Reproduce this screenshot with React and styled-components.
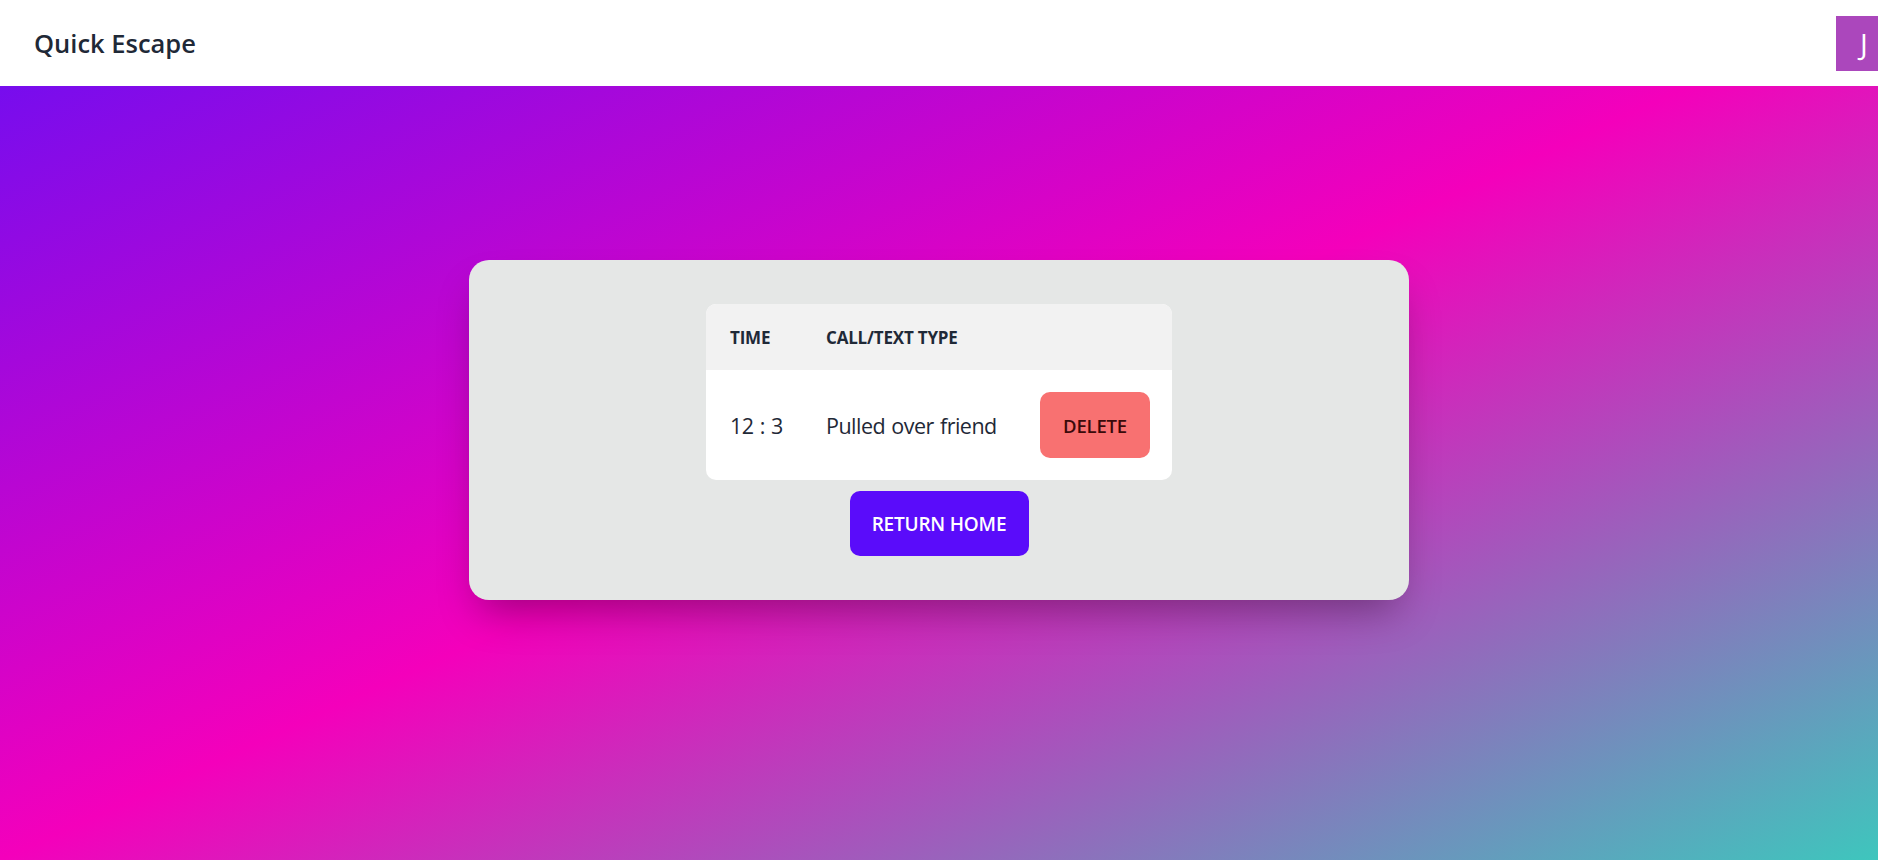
import React from 'react';
import styled, { createGlobalStyle } from 'styled-components';

const GlobalStyle = createGlobalStyle`
  html, body {
    margin: 0;
    padding: 0;
    overflow: hidden;
  }
  body {
    font-family: "Open Sans", "Noto Sans", sans-serif;
    color: #1f2937;
  }
  * {
    box-sizing: border-box;
  }
`;

const Page = styled.div`
  min-height: 100vh;
  display: flex;
  flex-direction: column;
  background: linear-gradient(to bottom right, #690ef3 0%, #f400bb 50%, #3ec6bd 100%);
`;

const NavBar = styled.header`
  height: 86px;
  background: #ffffff;
  display: flex;
  align-items: center;
  justify-content: space-between;
  padding-left: 34px;
  overflow: hidden;
`;

const Brand = styled.div`
  font-size: 25.5px;
  font-weight: 600;
  color: #1f2937;
`;

const Avatar = styled.div`
  width: 56px;
  height: 55px;
  margin-right: -14px;
  background: #ab47bc;
  color: #ffffff;
  display: flex;
  align-items: center;
  justify-content: center;
  font-size: 29px;
  font-weight: 400;
  flex-shrink: 0;
`;

const Main = styled.main`
  flex: 1;
  display: flex;
  align-items: center;
  justify-content: center;
  padding-bottom: 86px;
`;

const Card = styled.section`
  width: 940px;
  padding: 44px;
  background: #e5e7e6;
  border-radius: 20px;
  box-shadow: 0 22px 40px -12px rgba(0, 0, 0, 0.35);
  display: flex;
  flex-direction: column;
  align-items: center;
  gap: 11px;
`;

const Table = styled.table`
  width: 466px;
  table-layout: fixed;
  border-collapse: collapse;
  background: #ffffff;
  border-radius: 10px;
  overflow: hidden;
`;

const HeadRow = styled.tr`
  background: #f2f2f2;
  height: 66px;
`;

const Th = styled.th`
  text-align: left;
  padding: 0 0 0 24px;
  font-size: 17px;
  font-weight: 700;
  text-transform: uppercase;
  color: #1f2937;
  letter-spacing: -0.2px;
  white-space: nowrap;
`;

const Td = styled.td`
  height: 110px;
  padding: 0 0 0 24px;
  font-size: 21.5px;
  color: #1f2937;
  white-space: nowrap;
  letter-spacing: -0.5px;
  word-spacing: 1px;
`;

const Button = styled.button`
  border: none;
  border-radius: 10px;
  padding: 0;
  font-family: inherit;
  font-size: ${(p) => p.$size}px;
  font-weight: 600;
  text-transform: uppercase;
  cursor: pointer;
  height: ${(p) => p.$h}px;
  width: ${(p) => p.$w}px;
  background: ${(p) => p.$bg};
  color: ${(p) => p.$fg};
  letter-spacing: -0.2px;
`;

const App = () => {
  const rows = [{ time: '12 : 3', type: 'Pulled over friend' }];

  return (
    <Page>
      <GlobalStyle />
      <NavBar>
        <Brand>Quick Escape</Brand>
        <Avatar>J</Avatar>
      </NavBar>
      <Main>
        <Card>
          <Table>
            <colgroup>
              <col style={{ width: 96 }} />
              <col style={{ width: 214 }} />
              <col style={{ width: 156 }} />
            </colgroup>
            <thead>
              <HeadRow>
                <Th>Time</Th>
                <Th>Call/Text Type</Th>
                <Th />
              </HeadRow>
            </thead>
            <tbody>
              {rows.map((r, i) => (
                <tr key={i}>
                  <Td>{r.time}</Td>
                  <Td>{r.type}</Td>
                  <Td>
                    <Button $w={110} $h={66} $size={18.5} $bg="#f87171" $fg="#3b0a0a">
                      Delete
                    </Button>
                  </Td>
                </tr>
              ))}
            </tbody>
          </Table>
          <Button $w={179} $h={65} $size={19} $bg="#5a0cfa" $fg="#ffffff">
            Return Home
          </Button>
        </Card>
      </Main>
    </Page>
  );
};

export default App;
